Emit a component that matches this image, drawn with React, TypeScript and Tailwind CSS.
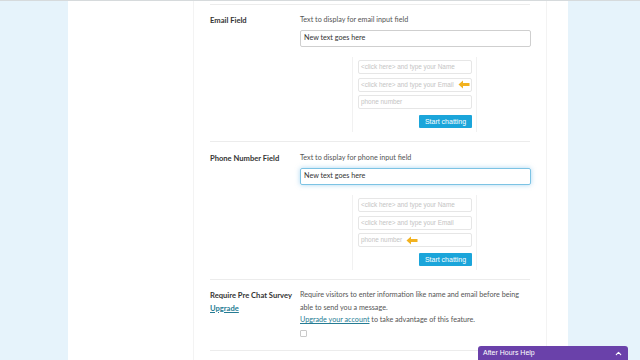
import React from 'react';
import { ChevronUp } from 'lucide-react';

const PointerArrow: React.FC = () => (
  <svg width="12" height="9" viewBox="0 0 12 9" className="shrink-0">
    <path d="M0.5 4.5 L5 0.5 L5 3 L11.5 3 L11.5 6 L5 6 L5 8.5 Z" fill="#f2b21f" />
  </svg>
);

interface PreviewProps {
  pointAt: 'email' | 'phone';
}

const PreviewBox: React.FC<PreviewProps> = ({ pointAt }) => {
  const fields = [
    { key: 'name', text: '<click here> and type your Name' },
    { key: 'email', text: '<click here> and type your Email' },
    { key: 'phone', text: 'phone number' },
  ];
  return (
    <div className="ml-[52px] w-[125px] border-x border-[#f1f1f1] pl-[5px] pr-[5px] pt-[3px] pb-[4px]">
      <div className="flex flex-col gap-[3.5px]">
        {fields.map(f => (
          <div
            key={f.key}
            className="h-[14px] w-[114px] border border-[#e6e6e6] rounded-[2px] flex items-center gap-[4px] px-[2px] font-['Liberation_Sans',Arial,sans-serif] text-[6.4px] text-[#c4c4c4] whitespace-nowrap"
          >
            <span>{f.text}</span>
            {pointAt === f.key && <PointerArrow />}
          </div>
        ))}
      </div>
      <div className="flex justify-end w-[114px] mt-[6px]">
        <button className="h-[13px] w-[53px] bg-[#1ba5da] text-white font-['Liberation_Sans',Arial,sans-serif] text-[7px] leading-[13px] rounded-[1px]">
          Start chatting
        </button>
      </div>
    </div>
  );
};

interface FieldSectionProps {
  label: string;
  hint: string;
  pointAt: 'email' | 'phone';
  focused?: boolean;
  height: string;
  pad: string;
}

const FieldSection: React.FC<FieldSectionProps> = ({ label, hint, pointAt, focused, height, pad }) => (
  <section className={`flex border-t border-[#ececec] ${height} ${pad}`}>
    <div className="w-[90px] shrink-0 font-bold text-[#333] text-[7.6px] leading-[12px]">{label}</div>
    <div className="w-[231px]">
      <div className="text-[7.2px] leading-[12px] text-[#555]">{hint}</div>
      <div
        className={`mt-[4px] h-[17px] w-[231px] rounded-[2px] border flex items-center px-[3px] text-[7.2px] text-[#333] ${
          focused ? 'border-[#7cc3e4] shadow-[0_0_5px_rgba(102,180,230,0.55)]' : 'border-[#cfcfcf]'
        }`}
      >
        New text goes here
      </div>
      <div className="mt-[10px]">
        <PreviewBox pointAt={pointAt} />
      </div>
    </div>
  </section>
);

export default function App() {
  return (
    <div className="w-[640px] h-[360px] overflow-hidden bg-[#e6f3fb] font-['Lato','Open_Sans',sans-serif] relative">
      <div className="h-[1px] bg-[#d6dadc]" />
      <div className="flex h-[359px]">
        <div className="w-[68px] shrink-0" />
        <div className="w-[500px] shrink-0 bg-white flex">
          <div className="w-[126px] shrink-0 border-r border-[#f3f3f3]" />
          <div className="w-[353px] shrink-0 border-r border-[#f3f3f3] px-[16px] pt-[3px]">
            <FieldSection
              label="Email Field"
              hint="Text to display for email input field"
              pointAt="email"
              height="h-[137px]"
              pad="pt-[9px]"
            />
            <FieldSection
              label="Phone Number Field"
              hint="Text to display for phone input field"
              pointAt="phone"
              focused
              height="h-[138px]"
              pad="pt-[10px]"
            />
            <section className="flex border-t border-[#ececec] h-[71px] pt-[9px]">
              <div className="w-[90px] shrink-0 text-[7.6px] leading-[12.5px]">
                <div className="font-bold text-[#333]">Require Pre Chat Survey</div>
                <div>
                  <a className="font-bold text-[#267c94] underline">Upgrade</a>
                </div>
              </div>
              <div className="w-[231px] text-[7.2px] leading-[12.5px] text-[#555]">
                <p>Require visitors to enter information like name and email before being able to send you a message.</p>
                <p>
                  <a className="text-[#267c94] underline">Upgrade your account</a> to take advantage of this feature.
                </p>
                <div className="mt-[3px] w-[7px] h-[7px] border border-[#c9c9c9] rounded-[1px]" />
              </div>
            </section>
            <div className="border-t border-[#ececec]" />
          </div>
        </div>
      </div>
      <div className="absolute left-[478px] top-[346px] w-[150px] h-[14px] bg-[#6a41aa] rounded-t-[3px] flex items-center justify-between px-[5px] text-white font-['Liberation_Sans',Arial,sans-serif] text-[7px]">
        <span>After Hours Help</span>
        <ChevronUp size={9} strokeWidth={3} />
      </div>
    </div>
  );
}
